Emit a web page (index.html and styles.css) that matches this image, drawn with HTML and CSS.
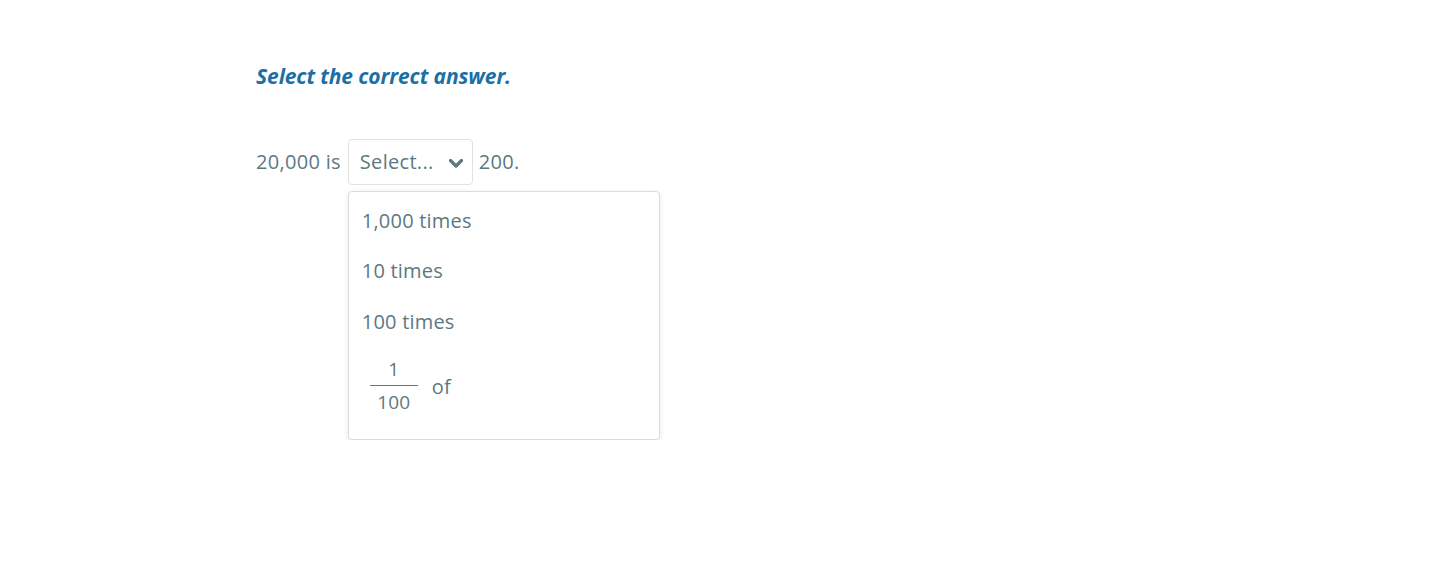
FILE: index.html
```html
<!DOCTYPE html>
<html>
<head>
<meta charset="utf-8">
<link rel="stylesheet" href="styles.css">
</head>
<body>
<div class="page">
  <h1 class="prompt">Select the correct answer.</h1>
  <div class="question">
    <span class="txt">20,000 is</span>
    <div class="select-wrap">
      <div class="select">
        <span>Select...</span>
        <svg class="chev" width="16" height="12" viewBox="0 0 16 12"><path d="M2.5 3.5 L8 9 L13.5 3.5" fill="none" stroke="#5d7882" stroke-width="3.2" stroke-linecap="round" stroke-linejoin="round"/></svg>
      </div>
      <div class="menu">
        <div class="opt">1,000 times</div>
        <div class="opt">10 times</div>
        <div class="opt">100 times</div>
        <div class="opt frac-opt">
          <span class="frac"><span class="num">1</span><span class="den">100</span></span>
          <span class="of">of</span>
        </div>
      </div>
    </div>
    <span class="txt">200.</span>
  </div>
</div>
</body>
</html>
```

FILE: styles.css
```css
html, body {
  margin: 0;
  padding: 0;
  background: #fff;
}
body {
  font-family: "Open Sans", "Noto Sans", sans-serif;
  color: #5d7882;
}
.page {
  padding: 62px 0 0 256px;
}
.prompt {
  margin: 0;
  font-size: 21px;
  font-weight: 700;
  font-style: italic;
  color: #1b6fa5;
  line-height: 28px;
  letter-spacing: -0.1px;
}
.question {
  margin-top: 49px;
  display: flex;
  align-items: flex-start;
  font-size: 20px;
  letter-spacing: 0.3px;
}
.txt {
  line-height: 45px;
}
.select-wrap {
  width: 125px;
  margin: 0 6px 0 7px;
  display: flex;
  flex-direction: column;
  align-items: flex-start;
  gap: 6px;
}
.select {
  box-sizing: border-box;
  height: 46px;
  width: 125px;
  border: 1px solid #e1e1e1;
  border-radius: 4px;
  display: flex;
  align-items: center;
  justify-content: space-between;
  padding: 0 8px 0 11px;
  line-height: 1;
}
.chev {
  display: block;
  margin-top: 2px;
}
.menu {
  flex: none;
  width: 312px;
  box-sizing: border-box;
  padding: 3px 0 13px;
  background: #fff;
  border: 1px solid #dcdcdc;
  border-radius: 4px;
  box-shadow: 0 2px 6px rgba(0,0,0,0.09);
}
.opt {
  padding: 0 13px;
  height: 50.5px;
  display: flex;
  align-items: center;
  font-size: 20px;
  letter-spacing: 0.2px;
}
.frac-opt {
  height: 79px;
  padding-left: 21px;
}
.frac {
  display: inline-flex;
  flex-direction: column;
  align-items: center;
  line-height: 1;
  font-size: 19px;
}
.num {
  display: block;
  padding: 0 0 6px;
  border-bottom: 1px solid #5d7882;
  width: 48px;
  text-align: center;
}
.den {
  display: block;
  padding-top: 7px;
}
.of {
  margin-left: 14px;
}
```
